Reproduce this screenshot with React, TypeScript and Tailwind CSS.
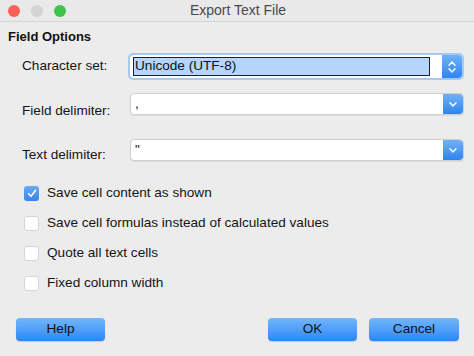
import React from "react";

const font = { fontFamily: '"Liberation Sans", Arial, sans-serif' };

function Chevron({ up = false }: { up?: boolean }) {
  return (
    <svg width="8" height="5" viewBox="0 0 8 5" fill="none">
      <path
        d={up ? "M1 4.2 L4 1 L7 4.2" : "M1 0.8 L4 4 L7 0.8"}
        stroke="white"
        strokeWidth="1.4"
        strokeLinecap="round"
        strokeLinejoin="round"
      />
    </svg>
  );
}

function DropButton() {
  return (
    <div className="flex h-full w-[20px] items-center justify-center rounded-r-[4px] bg-gradient-to-b from-[#6fb1f7] to-[#2d84f2]">
      <Chevron />
    </div>
  );
}

function Combo({ value }: { value: string }) {
  return (
    <div className="flex h-[22px] w-[334px] items-stretch rounded-[4px] border border-[#cfcfcf] bg-white shadow-[0_1px_0_rgba(0,0,0,0.06)]">
      <div className="flex flex-1 items-center pl-[4px] text-[13.6px] text-[#111]">{value}</div>
      <DropButton />
    </div>
  );
}

function Check({ checked, label }: { checked?: boolean; label: string }) {
  return (
    <div className="flex h-[30px] items-center">
      {checked ? (
        <div className="ml-[24px] flex h-[15px] w-[15px] items-center justify-center rounded-[3px] bg-gradient-to-b from-[#6aaaf5] to-[#3584ea]">
          <svg width="10" height="9" viewBox="0 0 10 9" fill="none">
            <path d="M1.5 4.8 L4 7.3 L8.6 1.3" stroke="white" strokeWidth="1.6" strokeLinecap="round" strokeLinejoin="round" />
          </svg>
        </div>
      ) : (
        <div className="ml-[24px] h-[15px] w-[15px] rounded-[3px] border border-[#d6d6d6] bg-white" />
      )}
      <span className="ml-[8px] text-[13.6px] text-[#151515]">{label}</span>
    </div>
  );
}

function Btn({ label, className = "" }: { label: string; className?: string }) {
  return (
    <div
      className={`flex h-[23px] w-[89px] items-center justify-center rounded-[4px] bg-gradient-to-b from-[#72b6fb] to-[#2a87f6] text-[13.6px] text-[#111] shadow-[0_1px_1px_rgba(0,0,0,0.15)] ${className}`}
    >
      {label}
    </div>
  );
}

export default function App() {
  return (
    <div className="h-[356px] w-[474px] overflow-hidden bg-[#ececec]" style={font}>
      {/* title bar */}
      <div className="relative flex h-[22px] items-center border-b border-[#d4d4d4] bg-[#e9e9e9]">
        <div className="ml-[8px] flex gap-[11px]">
          <div className="h-[12px] w-[12px] rounded-full bg-[#fc5f57]" />
          <div className="h-[12px] w-[12px] rounded-full bg-[#d3d3d3]" />
          <div className="h-[12px] w-[12px] rounded-full bg-[#3cc44a]" />
        </div>
        <div className="absolute inset-0 flex items-center justify-center pl-[2px] text-[14px] text-[#4a4a4a]">
          Export Text File
        </div>
      </div>

      <div className="ml-[8px] mt-[7px] h-[16px] text-[13px] font-bold leading-[16px] text-[#111]">Field Options</div>

      {/* character set */}
      <div className="mt-[8px] flex h-[27px] items-center pl-[22px]">
        <div className="w-[106px] text-[13.6px] text-[#151515]">Character set:</div>
        <div className="flex h-[27px] w-[336px] rounded-[5px] bg-[#a9c8f0] p-[2px]">
          <div className="flex flex-1 items-stretch rounded-[4px] bg-white">
            <div className="flex flex-1 items-center pl-[3px] pr-[12px]">
              <div className="flex h-[19px] w-full items-center border border-[#222] bg-[#b4d5fe] pl-[1px] text-[13.6px] text-[#111]">
                Unicode (UTF-8)
              </div>
            </div>
            <div className="flex w-[20px] flex-col items-center justify-center gap-[2px] rounded-r-[4px] bg-gradient-to-b from-[#6fb1f7] to-[#2d84f2]">
              <Chevron up />
              <Chevron />
            </div>
          </div>
        </div>
      </div>

      {/* field delimiter */}
      <div className="mt-[13px] flex h-[22px] items-start pl-[22px]">
        <div className="w-[108px] pt-[8px] text-[13.6px] text-[#151515]">Field delimiter:</div>
        <Combo value="," />
      </div>

      {/* text delimiter */}
      <div className="mt-[24px] flex h-[22px] items-start pl-[22px]">
        <div className="w-[108px] pt-[6px] text-[13.6px] text-[#151515]">Text delimiter:</div>
        <Combo value={'"'} />
      </div>

      <div className="mt-[17px] flex flex-col">
        <Check checked label="Save cell content as shown" />
        <Check label="Save cell formulas instead of calculated values" />
        <Check label="Quote all text cells" />
        <Check label="Fixed column width" />
      </div>

      <div className="mt-[20px] flex items-center pl-[16px] pr-[15px]">
        <Btn label="Help" />
        <div className="flex-1" />
        <Btn label="OK" />
        <Btn label="Cancel" className="ml-[12px] w-[90px]" />
      </div>
    </div>
  );
}
